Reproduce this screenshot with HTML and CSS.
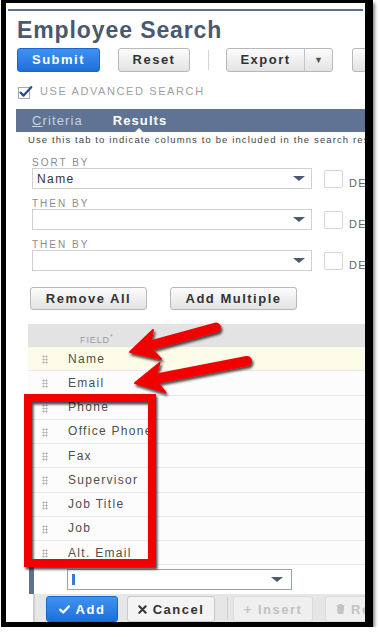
FILE: index.html
```html
<!DOCTYPE html>
<html lang="en">
<head>
<meta charset="utf-8">
<title>Employee Search</title>
<link rel="stylesheet" href="styles.css">
</head>
<body>
<div class="frame">
  <div class="topline"></div>
  <h1 class="title">Employee Search</h1>

  <div class="toolbar">
    <button class="btn btn-primary w-submit">Submit</button>
    <button class="btn w-reset">Reset</button>
    <span class="sep"></span>
    <div class="btn split w-export"><span class="split-main">Export</span><span class="split-arrow">&#9660;</span></div>
    <button class="btn w-more"></button>
  </div>

  <div class="adv">
    <svg class="adv-cb" width="16" height="14" viewBox="0 0 16 14"><rect x="0.5" y="2.5" width="11" height="11" fill="#fff" stroke="#a9a9a9"/><path d="M2.6 7.6 L5.6 10.6 L13.2 2.2" fill="none" stroke="#2b4c8c" stroke-width="2.3" stroke-linecap="round" stroke-linejoin="round"/></svg>
    <span class="adv-text">USE ADVANCED SEARCH</span>
  </div>

  <div class="tabs">
    <span class="tab"><u>C</u>riteria</span>
    <span class="tab active">Results</span>
  </div>
  <p class="help">Use this tab to indicate columns to be included in the search results.</p>

  <div class="sort">
    <div class="sort-label">SORT BY</div>
    <div class="sort-row">
      <div class="select"><span class="select-val">Name</span><span class="caret"></span></div>
      <span class="cb"></span><span class="desc">DESCENDING</span>
    </div>
    <div class="sort-label">THEN BY</div>
    <div class="sort-row">
      <div class="select"><span class="select-val"></span><span class="caret"></span></div>
      <span class="cb"></span><span class="desc">DESCENDING</span>
    </div>
    <div class="sort-label">THEN BY</div>
    <div class="sort-row">
      <div class="select"><span class="select-val"></span><span class="caret"></span></div>
      <span class="cb"></span><span class="desc">DESCENDING</span>
    </div>
  </div>

  <div class="actions">
    <button class="btn w-remove">Remove All</button>
    <button class="btn w-addm">Add Multiple</button>
  </div>

  <div class="grid">
    <div class="grid-head"><span class="head-field">FIELD<sup>*</sup></span></div>
    <div class="grid-row selected"><span class="grip"></span><span class="cell">Name</span></div>
    <div class="grid-row"><span class="grip"></span><span class="cell">Email</span></div>
    <div class="grid-row"><span class="grip"></span><span class="cell">Phone</span></div>
    <div class="grid-row"><span class="grip"></span><span class="cell">Office Phone</span></div>
    <div class="grid-row"><span class="grip"></span><span class="cell">Fax</span></div>
    <div class="grid-row"><span class="grip"></span><span class="cell">Supervisor</span></div>
    <div class="grid-row"><span class="grip"></span><span class="cell">Job Title</span></div>
    <div class="grid-row"><span class="grip"></span><span class="cell">Job</span></div>
    <div class="grid-row"><span class="grip"></span><span class="cell">Alt. Email</span></div>

    <div class="edit-row">
      <div class="select select-focus"><span class="cursor"></span><span class="caret caret-edit"></span></div>
    </div>
    <div class="edit-bar">
      <button class="btn btn-primary w-add"><svg class="ico" width="11" height="9" viewBox="0 0 11 9"><path d="M1.2 4.6 L4.2 7.5 L9.8 1.4" fill="none" stroke="#fff" stroke-width="2.2" stroke-linecap="round" stroke-linejoin="round"/></svg>Add</button>
      <button class="btn btn-light w-cancel"><svg class="ico" width="9" height="9" viewBox="0 0 9 9"><path d="M1.3 1.3 L7.7 7.7 M7.7 1.3 L1.3 7.7" stroke="#333" stroke-width="2" stroke-linecap="round"/></svg>Cancel</button>
      <span class="sep sep-bar"></span>
      <button class="btn btn-disabled w-insert">+ Insert</button>
      <button class="btn btn-disabled w-rem"><svg class="ico" width="9" height="10" viewBox="0 0 9 10"><path d="M0.5 1.5 H8.5 M3 1.5 V0.5 H6 V1.5 M1.5 2.5 H7.5 L7 9.5 H2 Z" fill="#c4c4c4" stroke="#c4c4c4" stroke-width="1"/></svg>Remove</button>
    </div>
  </div>

  <svg class="annot" width="359" height="619" viewBox="6 3 359 619">
    <defs>
      <filter id="sh" x="-20%" y="-20%" width="140%" height="150%">
        <feDropShadow dx="1.5" dy="2.5" stdDeviation="1.3" flood-color="#000" flood-opacity="0.7"/>
      </filter>
    </defs>
    <g filter="url(#sh)" fill="#f20000" stroke="#f20000">
      <rect x="28" y="398" width="124" height="165" fill="none" stroke-width="8"/>
      <line x1="216" y1="327.5" x2="152" y2="345" stroke-width="10" stroke-linecap="round"/>
      <polygon points="130,352 153,330 149.3,346.6 161,359" stroke-width="2" stroke-linejoin="round"/>
      <line x1="247" y1="361" x2="157" y2="378.5" stroke-width="10" stroke-linecap="round"/>
      <polygon points="135,383 159.6,363 154.6,379.2 165.4,392.4" stroke-width="2" stroke-linejoin="round"/>
    </g>
  </svg>
</div>
</body>
</html>
```

FILE: styles.css
```css
html, body {
  margin: 0;
  padding: 0;
  background: #fff;
}

.frame {
  position: relative;
  box-sizing: border-box;
  width: 372px;
  height: 627px;
  margin-left: 1px;
  border-style: solid;
  border-color: #000;
  border-width: 3px 8px 5px 5px;
  background: #fff;
  overflow: hidden;
  box-shadow: 2px 3px 3px rgba(0, 0, 0, 0.45);
  font-family: "Liberation Sans", Arial, sans-serif;
  white-space: nowrap;
}

.topline {
  height: 2px;
  margin: 6px 2px 0;
  background: #5e7191;
}

.title {
  margin: 6px 0 0 11px;
  font-size: 23px;
  line-height: 26px;
  font-weight: bold;
  letter-spacing: 0.9px;
  color: #4a5870;
}

/* buttons */
.btn {
  box-sizing: border-box;
  flex-shrink: 0;
  height: 24px;
  padding: 0;
  border: 1px solid #b8b8b8;
  border-radius: 3px;
  background: linear-gradient(#fcfcfc, #e3e3e3);
  font: bold 13px/22px "Liberation Sans", Arial, sans-serif;
  letter-spacing: 1.5px;
  color: #333;
  text-align: center;
  white-space: nowrap;
}

.btn-primary {
  border-color: #1d64c8;
  background: linear-gradient(#3f92f2, #1f6fdb);
  color: #fff;
}

.toolbar {
  display: flex;
  align-items: center;
  height: 24px;
  margin-top: 5px;
  padding-left: 11px;
}

.w-submit { width: 83px; }
.w-reset { width: 72px; margin-left: 18px; }

.sep {
  flex-shrink: 0;
  width: 1px;
  height: 20px;
  margin: 0 17px 0 18px;
  background: #d3d3d3;
}

.split {
  display: flex;
}

.w-export { width: 107px; }

.split-main {
  flex: 1;
  border-right: 1px solid #c4c4c4;
}

.split-arrow {
  width: 27px;
  font-size: 9px;
  letter-spacing: 0;
  color: #555;
}

.w-more { width: 40px; margin-left: 19px; }

/* advanced search checkbox */
.adv {
  display: flex;
  height: 15px;
  margin: 11px 0 0 12px;
}

.adv-cb {
  flex-shrink: 0;
  margin-top: 2px;
}

.adv-text {
  margin-left: 6px;
  padding-top: 2px;
  font-size: 11px;
  line-height: 13px;
  letter-spacing: 1.6px;
  color: #a0a0a0;
}

/* tabs */
.tabs {
  display: flex;
  height: 23px;
  margin: 11px 0 0 10px;
  padding-left: 16px;
  background: #5f7394;
  font-size: 13px;
  line-height: 23px;
  letter-spacing: 1.1px;
}

.tab {
  position: relative;
  color: #c9d1dd;
}

.tab + .tab {
  margin-left: 30px;
}

.tab.active {
  font-weight: bold;
  color: #fff;
}

.tab.active::after {
  content: "";
  position: absolute;
  left: 50%;
  bottom: 0;
  margin-left: -5px;
  border-left: 4px solid transparent;
  border-right: 4px solid transparent;
  border-bottom: 4px solid #fff;
}

.help {
  margin: 2px 0 0 22px;
  font-size: 9.5px;
  line-height: 11px;
  letter-spacing: 1.12px;
  color: #444;
}

/* sort */
.sort {
  margin: 12px 0 0 26px;
}

.sort-label {
  font-size: 10px;
  line-height: 11px;
  letter-spacing: 2px;
  color: #8c8c8c;
}

.sort-row + .sort-label {
  margin-top: 9px;
}

.sort-row {
  display: flex;
  align-items: center;
  height: 21px;
}

.select {
  box-sizing: border-box;
  flex-shrink: 0;
  display: flex;
  align-items: center;
  justify-content: space-between;
  width: 280px;
  height: 21px;
  padding: 0 6px 0 4px;
  border: 1px solid #d0d0d0;
  background: #fff;
}

.select-val {
  font-size: 12px;
  letter-spacing: 1.4px;
  color: #333;
}

.caret {
  width: 0;
  height: 0;
  border-left: 6.5px solid transparent;
  border-right: 6.5px solid transparent;
  border-top: 5px solid #4b5a72;
}

.cb {
  flex-shrink: 0;
  box-sizing: border-box;
  width: 19px;
  height: 18px;
  margin-left: 12px;
  border: 1px solid #d6d6d6;
  border-radius: 2px;
  background: #fff;
}

.desc {
  align-self: flex-end;
  margin-left: 6px;
  font-size: 11px;
  line-height: 12px;
  letter-spacing: 1.3px;
  color: #666;
}

/* action buttons */
.actions {
  display: flex;
  margin: 16px 0 0 24px;
}

.actions .btn {
  height: 23px;
  line-height: 21px;
}

.w-remove { width: 117px; }
.w-addm { width: 127px; margin-left: 23px; }

/* grid */
.grid {
  margin: 14px 0 0 22px;
}

.grid-head {
  height: 21px;
  padding: 2px 0 0 52px;
  background: #e3e3e3;
  font-size: 9px;
  line-height: 21px;
  letter-spacing: 0.9px;
  color: #9c9c9c;
}

.grid-head sup {
  font-size: 7px;
  vertical-align: 4px;
  letter-spacing: 0;
}

.grid-row {
  box-sizing: border-box;
  display: flex;
  align-items: center;
  height: 24.25px;
  padding-left: 14px;
  border-bottom: 1px solid #e9e9e9;
  background: #fcfcfc;
}

.grid-row.selected {
  background: #fbfbe8;
}

.grip {
  flex-shrink: 0;
  width: 6px;
  height: 9px;
  margin-top: 2px;
  background-image: radial-gradient(circle, #b3b3b3 0.9px, transparent 1.2px);
  background-size: 3px 3px;
}

.cell {
  margin-left: 20px;
  font-size: 12px;
  line-height: 14px;
  letter-spacing: 1.3px;
  color: #4f4f4f;
}

.edit-row {
  height: 21px;
  margin-left: 1px;
  padding: 4px 0 4px 33px;
  border-left: 5px solid #5d7090;
  background: #fff;
}

.select-focus {
  width: 225px;
  padding: 0 8px 0 4px;
  border-color: #7ba7df;
}

.cursor {
  width: 3px;
  height: 11px;
  background: #3b78d8;
}

.edit-bar {
  display: flex;
  align-items: flex-start;
  height: 30px;
  margin-left: 5px;
  padding: 2px 0 0 11px;
  border-left: 2px solid #cfcfcf;
  background: #e6e6e6;
}

.edit-bar .btn {
  height: 26px;
  line-height: 23px;
}

.ico {
  margin-right: 6px;
  vertical-align: 0;
}

.w-add { width: 72px; }

.btn-light {
  border-color: #c9c9c9;
  background: #f4f4f4;
}

.w-cancel { width: 88px; margin-left: 9px; }

.sep-bar {
  height: 22px;
  margin: 1px 5px 0 12px;
  background: #cfcfcf;
}

.btn-disabled {
  border-color: #dadada;
  background: #efefef;
  color: #c2c2c2;
}

.w-insert { width: 80px; }
.w-rem { width: 70px; margin-left: 12px; text-align: left; padding-left: 10px; }

/* annotation overlay */
.annot {
  position: absolute;
  left: 0;
  top: 0;
  pointer-events: none;
}
```
